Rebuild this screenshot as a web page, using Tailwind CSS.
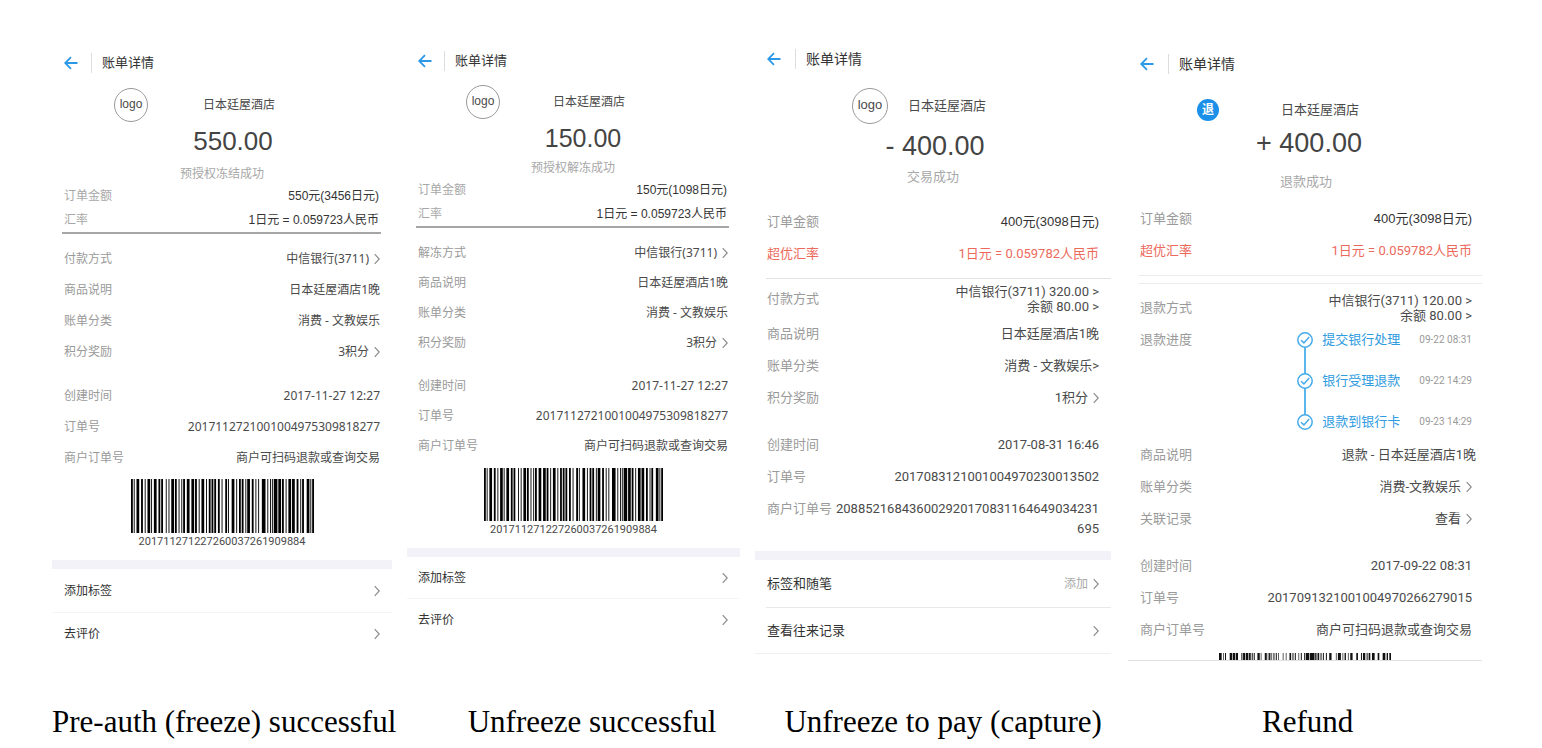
<!DOCTYPE html>
<html lang="zh-CN">
<head>
    <meta charset="UTF-8">
    <meta name="viewport" content="width=device-width, initial-scale=1.0">
    <title>账单详情</title>
    <script src="https://cdn.jsdelivr.net/npm/@tailwindcss/browser@4"></script>
</head>
<body class="bg-white text-[#4a4a4a] font-['Liberation_Sans','Noto_Sans_CJK_SC',sans-serif]">
    <!-- Shared icons -->
    <svg class="hidden">
        <symbol id="back" viewBox="0 0 14 14">
            <path d="M13.5 7H1.5M7 1.2L1.2 7L7 12.8" fill="none" stroke="#2b98e8" stroke-width="1.8" />
        </symbol>
        <symbol id="chevron" viewBox="0 0 6 12">
            <path d="M0.7 1.2L5.2 6L0.7 10.8" fill="none" stroke="#8c8c8c" stroke-width="1.2" />
        </symbol>
        <symbol id="check" viewBox="0 0 16 16">
            <circle cx="8" cy="8" r="7.2" fill="#fff" stroke="#45aaea" stroke-width="1.5" />
            <path d="M4 8.2L6.9 10.9L12.2 5" fill="none" stroke="#45aaea" stroke-width="1.5" />
        </symbol>
    </svg>

    <main class="pl-[52px] pr-[60px]">
        <div class="grid grid-cols-[340fr_333fr_356fr_356fr] gap-x-[15px]">

            <!-- Pre-auth -->
            <section class="pt-[45px] text-xs">
                <div class="px-3">
                    <header class="flex h-9 items-center">
                        <button aria-label="返回"><svg class="size-[14px]"><use href="#back" /></svg></button>
                        <h2 class="ml-[13px] flex h-5 items-center border-l border-[#ddd] pl-[10px] text-[13px] text-[#333]">账单详情</h2>
                    </header>
                    <div class="mt-1.5 flex h-9 items-center pl-[50px]">
                        <span class="flex size-[34px] items-center justify-center rounded-full border border-[#999] pb-0.5">logo</span>
                        <span class="ml-[55px]">日本廷屋酒店</span>
                    </div>
                    <p class="h-9 pl-[22px] text-center text-[26px] leading-9 text-[#444]">550.00</p>
                    <p class="flex h-[25px] items-end justify-center leading-5 text-[#a8a8a8]">预授权冻结成功</p>
                </div>
                <dl class="mr-[11px] ml-[10px] border-b-2 border-[#a6a6a6] px-0.5 text-[#333]">
                    <div class="flex h-6 items-center justify-between"><dt class="text-[#a8a8a8]">订单金额</dt><dd>550元(3456日元)</dd></div>
                    <div class="flex h-6 items-center justify-between"><dt class="text-[#a8a8a8]">汇率</dt><dd>1日元 = 0.059723人民币</dd></div>
                </dl>
                <dl class="mt-[9px] px-3 font-['Noto_Sans','Noto_Sans_CJK_SC',sans-serif]">
                    <div class="flex h-[31px] items-center justify-between"><dt class="text-[#9a9a9a]">付款方式</dt><dd><button class="flex items-center gap-[5px]">中信银行(3711)<svg class="h-3 w-1.5"><use href="#chevron" /></svg></button></dd></div>
                    <div class="flex h-[31px] items-center justify-between"><dt class="text-[#9a9a9a]">商品说明</dt><dd>日本廷屋酒店1晚</dd></div>
                    <div class="flex h-[31px] items-center justify-between"><dt class="text-[#9a9a9a]">账单分类</dt><dd>消费 - 文教娱乐</dd></div>
                    <div class="flex h-[31px] items-center justify-between"><dt class="text-[#9a9a9a]">积分奖励</dt><dd><button class="flex items-center gap-[5px]">3积分<svg class="h-3 w-1.5"><use href="#chevron" /></svg></button></dd></div>
                </dl>
                <dl class="mt-[13px] px-3 font-['Noto_Sans','Noto_Sans_CJK_SC',sans-serif]">
                    <div class="flex h-[31px] items-center justify-between"><dt class="text-[#9a9a9a]">创建时间</dt><dd>2017-11-27 12:27</dd></div>
                    <div class="flex h-[31px] items-center justify-between"><dt class="text-[#9a9a9a]">订单号</dt><dd>2017112721001004975309818277</dd></div>
                    <div class="flex h-[31px] items-center justify-between"><dt class="text-[#9a9a9a]">商户订单号</dt><dd>商户可扫码退款或查询交易</dd></div>
                </dl>
                <svg class="barcode mx-auto mt-1.5 h-[54px] w-[183px]" data-code="201711271227260037261909884"></svg>
                <p class="text-center font-[Roboto,sans-serif] text-[11px] leading-[18px]">201711271227260037261909884</p>
                <div class="mt-[9px] h-[9px] bg-[#f2f2f8]"></div>
                <button class="flex h-[44px] w-full items-center justify-between border-b border-[#f5f5f5] px-3 text-[#333]">添加标签<svg class="h-3 w-1.5"><use href="#chevron" /></svg></button>
                <button class="flex h-[42px] w-full items-center justify-between px-3 text-[#333]">去评价<svg class="h-3 w-1.5"><use href="#chevron" /></svg></button>
            </section>

            <!-- Unfreeze -->
            <section class="pt-[43px] text-xs">
                <div class="pr-3 pl-[11px]">
                    <header class="flex h-9 items-center">
                        <button aria-label="返回"><svg class="size-[14px]"><use href="#back" /></svg></button>
                        <h2 class="ml-[12px] flex h-5 items-center border-l border-[#ddd] pl-[10px] text-[13px] text-[#333]">账单详情</h2>
                    </header>
                    <div class="mt-[5px] flex h-9 items-center pl-12">
                        <span class="flex size-[34px] items-center justify-center rounded-full border border-[#999] pb-0.5">logo</span>
                        <span class="ml-[53px]">日本廷屋酒店</span>
                    </div>
                    <p class="h-9 pl-[20px] text-center text-[25px] leading-9 text-[#444]">150.00</p>
                    <p class="flex h-[22px] items-end justify-center leading-5 text-[#a8a8a8]">预授权解冻成功</p>
                </div>
                <dl class="mr-[11px] ml-[9px] border-b-2 border-[#a6a6a6] px-0.5 text-[#333]">
                    <div class="flex h-6 items-center justify-between"><dt class="text-[#a8a8a8]">订单金额</dt><dd>150元(1098日元)</dd></div>
                    <div class="flex h-6 items-center justify-between"><dt class="text-[#a8a8a8]">汇率</dt><dd>1日元 = 0.059723人民币</dd></div>
                </dl>
                <dl class="mt-[10px] pr-3 pl-[11px] font-['Noto_Sans','Noto_Sans_CJK_SC',sans-serif]">
                    <div class="flex h-[30px] items-center justify-between"><dt class="text-[#9a9a9a]">解冻方式</dt><dd><button class="flex items-center gap-[5px]">中信银行(3711)<svg class="h-3 w-1.5"><use href="#chevron" /></svg></button></dd></div>
                    <div class="flex h-[30px] items-center justify-between"><dt class="text-[#9a9a9a]">商品说明</dt><dd>日本廷屋酒店1晚</dd></div>
                    <div class="flex h-[30px] items-center justify-between"><dt class="text-[#9a9a9a]">账单分类</dt><dd>消费 - 文教娱乐</dd></div>
                    <div class="flex h-[30px] items-center justify-between"><dt class="text-[#9a9a9a]">积分奖励</dt><dd><button class="flex items-center gap-[5px]">3积分<svg class="h-3 w-1.5"><use href="#chevron" /></svg></button></dd></div>
                </dl>
                <dl class="mt-[13px] pr-3 pl-[11px] font-['Noto_Sans','Noto_Sans_CJK_SC',sans-serif]">
                    <div class="flex h-[30px] items-center justify-between"><dt class="text-[#9a9a9a]">创建时间</dt><dd>2017-11-27 12:27</dd></div>
                    <div class="flex h-[30px] items-center justify-between"><dt class="text-[#9a9a9a]">订单号</dt><dd>2017112721001004975309818277</dd></div>
                    <div class="flex h-[30px] items-center justify-between"><dt class="text-[#9a9a9a]">商户订单号</dt><dd>商户可扫码退款或查询交易</dd></div>
                </dl>
                <svg class="barcode mx-auto mt-[7px] h-[53px] w-[179px]" data-code="201711271227260037261909884"></svg>
                <p class="text-center font-[Roboto,sans-serif] text-[11px] leading-[18px]">201711271227260037261909884</p>
                <div class="mt-[9px] h-[9px] bg-[#f2f2f8]"></div>
                <button class="flex h-[42px] w-full items-center justify-between border-b border-[#f5f5f5] pr-3 pl-[11px] text-[#333]">添加标签<svg class="h-3 w-1.5"><use href="#chevron" /></svg></button>
                <button class="flex h-[42px] w-full items-center justify-between pr-3 pl-[11px] text-[#333]">去评价<svg class="h-3 w-1.5"><use href="#chevron" /></svg></button>
            </section>

            <!-- Capture -->
            <section class="pt-[41px] text-[13px]">
                <div class="px-3">
                    <header class="flex h-9 items-center">
                        <button aria-label="返回"><svg class="size-[14px]"><use href="#back" /></svg></button>
                        <h2 class="ml-[14px] flex h-5 items-center border-l border-[#ddd] pl-[10px] text-sm text-[#333]">账单详情</h2>
                    </header>
                    <div class="mt-[11px] flex h-9 items-center pl-[85px]">
                        <span class="flex size-9 items-center justify-center rounded-full border border-[#999] pb-0.5">logo</span>
                        <span class="ml-5">日本廷屋酒店</span>
                    </div>
                    <p class="h-11 pl-1 text-center text-[27px] leading-11 text-[#444]">- 400.00</p>
                    <p class="text-center leading-[18px] text-[#a8a8a8]">交易成功</p>
                </div>
                <dl class="mt-5 px-3">
                    <div class="flex h-8 items-center justify-between"><dt class="text-[#9a9a9a]">订单金额</dt><dd class="text-[#333]">400元(3098日元)</dd></div>
                    <div class="flex h-8 items-center justify-between font-[Roboto,'Noto_Sans_CJK_SC',sans-serif] text-[#ec6a5c]"><dt>超优汇率</dt><dd>1日元 = 0.059782人民币</dd></div>
                </dl>
                <hr class="mt-2 ml-[11px] border-[#e2e2e2]">
                <dl class="px-3 font-[Roboto,'Noto_Sans_CJK_SC',sans-serif]">
                    <div class="flex h-[39px] items-center justify-between"><dt class="text-[#9a9a9a]">付款方式</dt><dd class="text-right leading-[15px]">中信银行(3711) 320.00 &gt;<br>余额 80.00 &gt;</dd></div>
                    <div class="flex h-8 items-center justify-between"><dt class="text-[#9a9a9a]">商品说明</dt><dd>日本廷屋酒店1晚</dd></div>
                    <div class="flex h-8 items-center justify-between"><dt class="text-[#9a9a9a]">账单分类</dt><dd>消费 - 文教娱乐&gt;</dd></div>
                    <div class="flex h-8 items-center justify-between"><dt class="text-[#9a9a9a]">积分奖励</dt><dd><button class="flex items-center gap-[5px]">1积分<svg class="h-3 w-1.5"><use href="#chevron" /></svg></button></dd></div>
                </dl>
                <dl class="mt-[15px] px-3 font-[Roboto,'Noto_Sans_CJK_SC',sans-serif]">
                    <div class="flex h-8 items-center justify-between"><dt class="text-[#9a9a9a]">创建时间</dt><dd>2017-08-31 16:46</dd></div>
                    <div class="flex h-8 items-center justify-between"><dt class="text-[#9a9a9a]">订单号</dt><dd>2017083121001004970230013502</dd></div>
                    <div class="flex gap-[3px] py-1.5 leading-5"><dt class="shrink-0 text-[#9a9a9a]">商户订单号</dt><dd class="flex-1 text-right break-all">208852168436002920170831164649034231695</dd></div>
                </dl>
                <div class="mt-1.5 h-[9px] bg-[#f2f2f8]"></div>
                <button class="flex h-[47px] w-full items-center px-3 text-[#333]">标签和随笔<span class="mr-[5px] ml-auto text-xs text-[#a8a8a8]">添加</span><svg class="h-3 w-1.5"><use href="#chevron" /></svg></button>
                <hr class="ml-[11px] border-[#e8e8e8]">
                <button class="flex h-[46px] w-full items-center justify-between border-b border-[#f0f0f0] px-3 text-[#333]">查看往来记录<svg class="h-3 w-1.5"><use href="#chevron" /></svg></button>
            </section>

            <!-- Refund -->
            <section class="pt-[46px] text-[13px]">
                <div class="pr-[10px] pl-[14px]">
                    <header class="flex h-9 items-center">
                        <button aria-label="返回"><svg class="size-[14px]"><use href="#back" /></svg></button>
                        <h2 class="ml-[14px] flex h-5 items-center border-l border-[#ddd] pl-[10px] text-sm text-[#333]">账单详情</h2>
                    </header>
                    <div class="mt-[10px] flex h-9 items-center pl-[57px]">
                        <span class="flex size-[22px] items-center justify-center rounded-full bg-[#1c90e8] text-xs font-bold text-white">退</span>
                        <span class="ml-[62px]">日本廷屋酒店</span>
                    </div>
                    <p class="h-[30px] pl-1.5 text-center text-[27px] leading-[30px] text-[#444]">+ 400.00</p>
                    <p class="mt-[14px] text-center leading-5 text-[#a8a8a8]">退款成功</p>
                </div>
                <dl class="mt-[11px] pr-[10px] pl-[14px]">
                    <div class="flex h-8 items-center justify-between"><dt class="text-[#9a9a9a]">订单金额</dt><dd class="text-[#333]">400元(3098日元)</dd></div>
                    <div class="flex h-8 items-center justify-between font-[Roboto,'Noto_Sans_CJK_SC',sans-serif] text-[#ec6a5c]"><dt>超优汇率</dt><dd>1日元 = 0.059782人民币</dd></div>
                </dl>
                <div class="mt-2 ml-[13px] h-[9px] border-y border-[#ececec]"></div>
                <dl class="mt-2 pr-[10px] pl-[14px] font-[Roboto,'Noto_Sans_CJK_SC',sans-serif]">
                    <div class="flex h-8 items-center justify-between"><dt class="text-[#9a9a9a]">退款方式</dt><dd class="text-right leading-[15px]">中信银行(3711) 120.00 &gt;<br>余额 80.00 &gt;</dd></div>
                    <div class="mt-1.5 flex justify-between leading-5">
                        <dt class="text-[#9a9a9a]">退款进度</dt>
                        <dd class="relative">
                            <span class="absolute top-2.5 bottom-2.5 left-[7px] w-0.5 bg-[#5cb6ee]"></span>
                            <ol class="relative flex flex-col gap-[21px] text-[#2f9be0]">
                                <li class="flex h-5 items-center"><svg class="size-4"><use href="#check" /></svg><span class="ml-[9px]">提交银行处理</span><time class="ml-[19px] text-[10px] text-[#9a9a9a]">09-22 08:31</time></li>
                                <li class="flex h-5 items-center"><svg class="size-4"><use href="#check" /></svg><span class="ml-[9px]">银行受理退款</span><time class="ml-[19px] text-[10px] text-[#9a9a9a]">09-22 14:29</time></li>
                                <li class="flex h-5 items-center"><svg class="size-4"><use href="#check" /></svg><span class="ml-[9px]">退款到银行卡</span><time class="ml-[19px] text-[10px] text-[#9a9a9a]">09-23 14:29</time></li>
                            </ol>
                        </dd>
                    </div>
                    <div class="mt-[7px] flex h-8 items-center justify-between"><dt class="text-[#9a9a9a]">商品说明</dt><dd class="-mr-1">退款 - 日本廷屋酒店1晚</dd></div>
                    <div class="flex h-8 items-center justify-between"><dt class="text-[#9a9a9a]">账单分类</dt><dd><button class="flex items-center gap-[5px]">消费-文教娱乐<svg class="h-3 w-1.5"><use href="#chevron" /></svg></button></dd></div>
                    <div class="flex h-8 items-center justify-between"><dt class="text-[#9a9a9a]">关联记录</dt><dd><button class="flex items-center gap-[5px]">查看<svg class="h-3 w-1.5"><use href="#chevron" /></svg></button></dd></div>
                </dl>
                <dl class="mt-[15px] pr-[10px] pl-[14px] font-[Roboto,'Noto_Sans_CJK_SC',sans-serif]">
                    <div class="flex h-8 items-center justify-between"><dt class="text-[#9a9a9a]">创建时间</dt><dd>2017-09-22 08:31</dd></div>
                    <div class="flex h-8 items-center justify-between"><dt class="text-[#9a9a9a]">订单号</dt><dd>2017091321001004970266279015</dd></div>
                    <div class="flex h-8 items-center justify-between"><dt class="text-[#9a9a9a]">商户订单号</dt><dd>商户可扫码退款或查询交易</dd></div>
                </dl>
                <div class="ml-0.5 border-b border-[#e2e2e2] pt-[7px]">
                    <svg class="mx-auto h-[7px] w-[172px]" viewBox="0 0 515 10" preserveAspectRatio="none" fill="#111">
                        <path d="M0 0h8v10h-8zM12 0h2v10h-2zM18 0h3v10h-3zM32 0h8v10h-8zM42 0h6v10h-6zM50 0h7v10h-7zM67 0h3v10h-3zM72 0h6v10h-6zM80 0h8v10h-8zM90 0h5v10h-5zM98 0h3v10h-3zM104 0h3v10h-3zM115 0h7v10h-7zM125 0h2v10h-2zM137 0h6v10h-6zM146 0h2v10h-2zM150 0h4v10h-4zM157 0h2v10h-2zM163 0h3v10h-3zM170 0h3v10h-3zM177 0h2v10h-2zM191 0h2v10h-2zM200 0h2v10h-2zM211 0h5v10h-5zM220 0h3v10h-3zM227 0h3v10h-3zM238 0h2v10h-2zM245 0h3v10h-3zM255 0h3v10h-3zM260 0h10v10h-10zM272 0h14v10h-14zM288 0h4v10h-4zM295 0h5v10h-5zM304 0h3v10h-3zM311 0h3v10h-3zM320 0h3v10h-3zM330 0h7v10h-7zM350 0h2v10h-2zM356 0h9v10h-9zM370 0h2v10h-2zM376 0h4v10h-4zM386 0h2v10h-2zM393 0h7v10h-7zM411 0h5v10h-5zM425 0h3v10h-3zM431 0h7v10h-7zM442 0h3v10h-3zM448 0h5v10h-5zM458 0h8v10h-8zM475 0h5v10h-5zM490 0h8v10h-8zM502 0h4v10h-4zM510 0h5v10h-5z" />
                    </svg>
                </div>
            </section>
        </div>

        <!-- Captions -->
        <div class="mt-[43px] grid grid-cols-[340fr_333fr_356fr_356fr] gap-x-[15px] text-center font-['Liberation_Serif',serif] text-[31px] leading-9 whitespace-nowrap text-black">
            <p class="text-left">Pre-auth (freeze) successful</p>
            <p class="pl-[30px]">Unfreeze successful</p>
            <p class="pl-4">Unfreeze to pay (capture)</p>
            <p class="pl-1.5">Refund</p>
        </div>
    </main>

    <script>
        // Code 128 symbol widths, indexed by value
        const SYMBOLS = ('212222 222122 222221 121223 121322 131222 122213 122312 132212 221213 ' +
            '221312 231212 112232 122132 122231 113222 123122 123221 223211 221132 ' +
            '221231 213212 223112 312131 311222 321122 321221 312212 322112 322211 ' +
            '212123 212321 232121 111323 131123 131321 112313 132113 132311 211313 ' +
            '231113 231311 112133 112331 132131 113123 113321 133121 313121 211331 ' +
            '231131 213113 213311 213131 311123 311321 331121 312113 312311 332111 ' +
            '314111 221411 431111 111224 111422 121124 121421 141122 141221 112214 ' +
            '112412 122114 122411 142112 142211 241211 221114 413111 241112 134111 ' +
            '111242 121142 121241 114212 124112 124211 411212 421112 421211 212141 ' +
            '214121 412121 111143 111341 131141 114113 114311 411113 411311 113141 ' +
            '114131 311141 411131 211412 211214 211232 2331112').split(' ');

        function encode(digits) {
            const values = [105];
            for (let i = 0; i + 1 < digits.length; i += 2) {
                values.push(Number(digits.slice(i, i + 2)));
            }
            // odd digit left over: switch to set B
            if (digits.length % 2) {
                values.push(100, Number(digits.slice(-1)) + 16);
            }
            const sum = values.reduce((total, v, i) => total + v * (i || 1), 0);
            values.push(sum % 103, 106);
            return values.map((v) => SYMBOLS[v]).join('');
        }

        document.querySelectorAll('.barcode').forEach((svg) => {
            let x = 0;
            let d = '';
            [...encode(svg.dataset.code)].forEach((w, i) => {
                if (i % 2 === 0) d += `M${x} 0h${w}v10h-${w}z`;
                x += Number(w);
            });
            svg.setAttribute('viewBox', `0 0 ${x} 10`);
            svg.setAttribute('preserveAspectRatio', 'none');
            svg.innerHTML = `<path d="${d}" />`;
        });
    </script>
</body>
</html>
